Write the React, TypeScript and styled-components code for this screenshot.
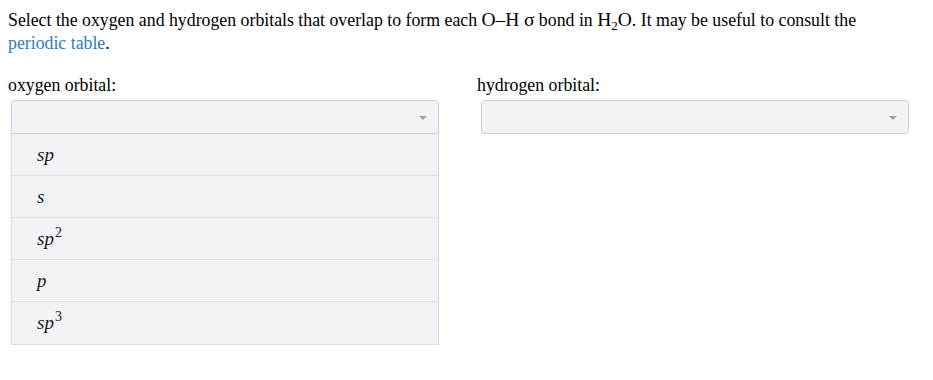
import React from 'react'
import styled, { createGlobalStyle } from 'styled-components'

const GlobalStyle = createGlobalStyle`
  html, body {
    margin: 0;
    padding: 0;
    background: #fff;
  }
  body {
    padding: 8px;
    font-family: 'Liberation Serif', 'Times New Roman', serif;
    font-size: 17.8px;
    color: #000;
  }
`

const Prompt = styled.p`
  margin: 0;
  line-height: 23px;
  width: 880px;
`

const MathText = styled.span`
  font-family: 'Liberation Serif', 'Times New Roman', serif;
  font-size: 19.5px;
`

const Sub = styled.sub`
  font-size: 13px;
  vertical-align: -4px;
  line-height: 0;
`

const Link = styled.a`
  color: #337ab7;
  text-decoration: none;
`

const Columns = styled.div`
  display: grid;
  grid-template-columns: 469px 1fr;
  margin-top: 21px;
`

const Field = styled.div<{ $indent: number }>`
  display: flex;
  flex-direction: column;
  padding-left: ${p => p.$indent}px;
`

const FieldLabel = styled.label<{ $shift: number }>`
  margin-left: -${p => p.$shift}px;
  line-height: 19px;
  margin-bottom: 5px;
`

const Select = styled.div<{ $open?: boolean }>`
  position: relative;
  box-sizing: border-box;
  width: 428px;
  height: 34px;
  background: #f2f3f7;
  border: 1px solid #cfcfd2;
  border-radius: ${p => (p.$open ? '4px 4px 0 0' : '4px')};
`

const Caret = styled.span`
  position: absolute;
  right: 11px;
  top: 15px;
  width: 0;
  height: 0;
  border-left: 4px solid transparent;
  border-right: 4px solid transparent;
  border-top: 4px solid #a2a2a6;
`

const Menu = styled.ul`
  list-style: none;
  margin: 0;
  padding: 0;
  width: 428px;
  box-sizing: border-box;
  border: 1px solid #dcdcdf;
  border-top: none;
`

const Option = styled.li`
  height: 42px;
  box-sizing: border-box;
  display: flex;
  align-items: center;
  padding-left: 25px;
  background: #f2f3f7;
  border-bottom: 1px solid #dedfe2;
  color: #1a1a1a;

  &:last-child {
    border-bottom: none;
  }
`

const Orbital = styled.span`
  font-style: italic;
  font-size: 19px;
  line-height: 20px;
`

const Sup = styled.sup`
  font-style: normal;
  font-size: 14px;
  vertical-align: 8px;
  line-height: 0;
  margin-left: 1px;
`

const options: { base: string; power?: string }[] = [
  { base: 'sp' },
  { base: 's' },
  { base: 'sp', power: '2' },
  { base: 'p' },
  { base: 'sp', power: '3' }
]

export default function App() {
  return (
    <>
      <GlobalStyle />
      <Prompt>
        Select the oxygen and hydrogen orbitals that overlap to form each{' '}
        <MathText>O–H</MathText> <MathText>σ</MathText> bond in{' '}
        <MathText>
          H<Sub>2</Sub>O
        </MathText>
        . It may be useful to consult the <Link href="#">periodic table</Link>.
      </Prompt>
      <Columns>
        <Field $indent={3}>
          <FieldLabel $shift={3}>oxygen orbital:</FieldLabel>
          <Select $open>
            <Caret />
          </Select>
          <Menu>
            {options.map((o, i) => (
              <Option key={i}>
                <Orbital>
                  {o.base}
                  {o.power && <Sup>{o.power}</Sup>}
                </Orbital>
              </Option>
            ))}
          </Menu>
        </Field>
        <Field $indent={4}>
          <FieldLabel $shift={4}>hydrogen orbital:</FieldLabel>
          <Select>
            <Caret />
          </Select>
        </Field>
      </Columns>
    </>
  )
}
